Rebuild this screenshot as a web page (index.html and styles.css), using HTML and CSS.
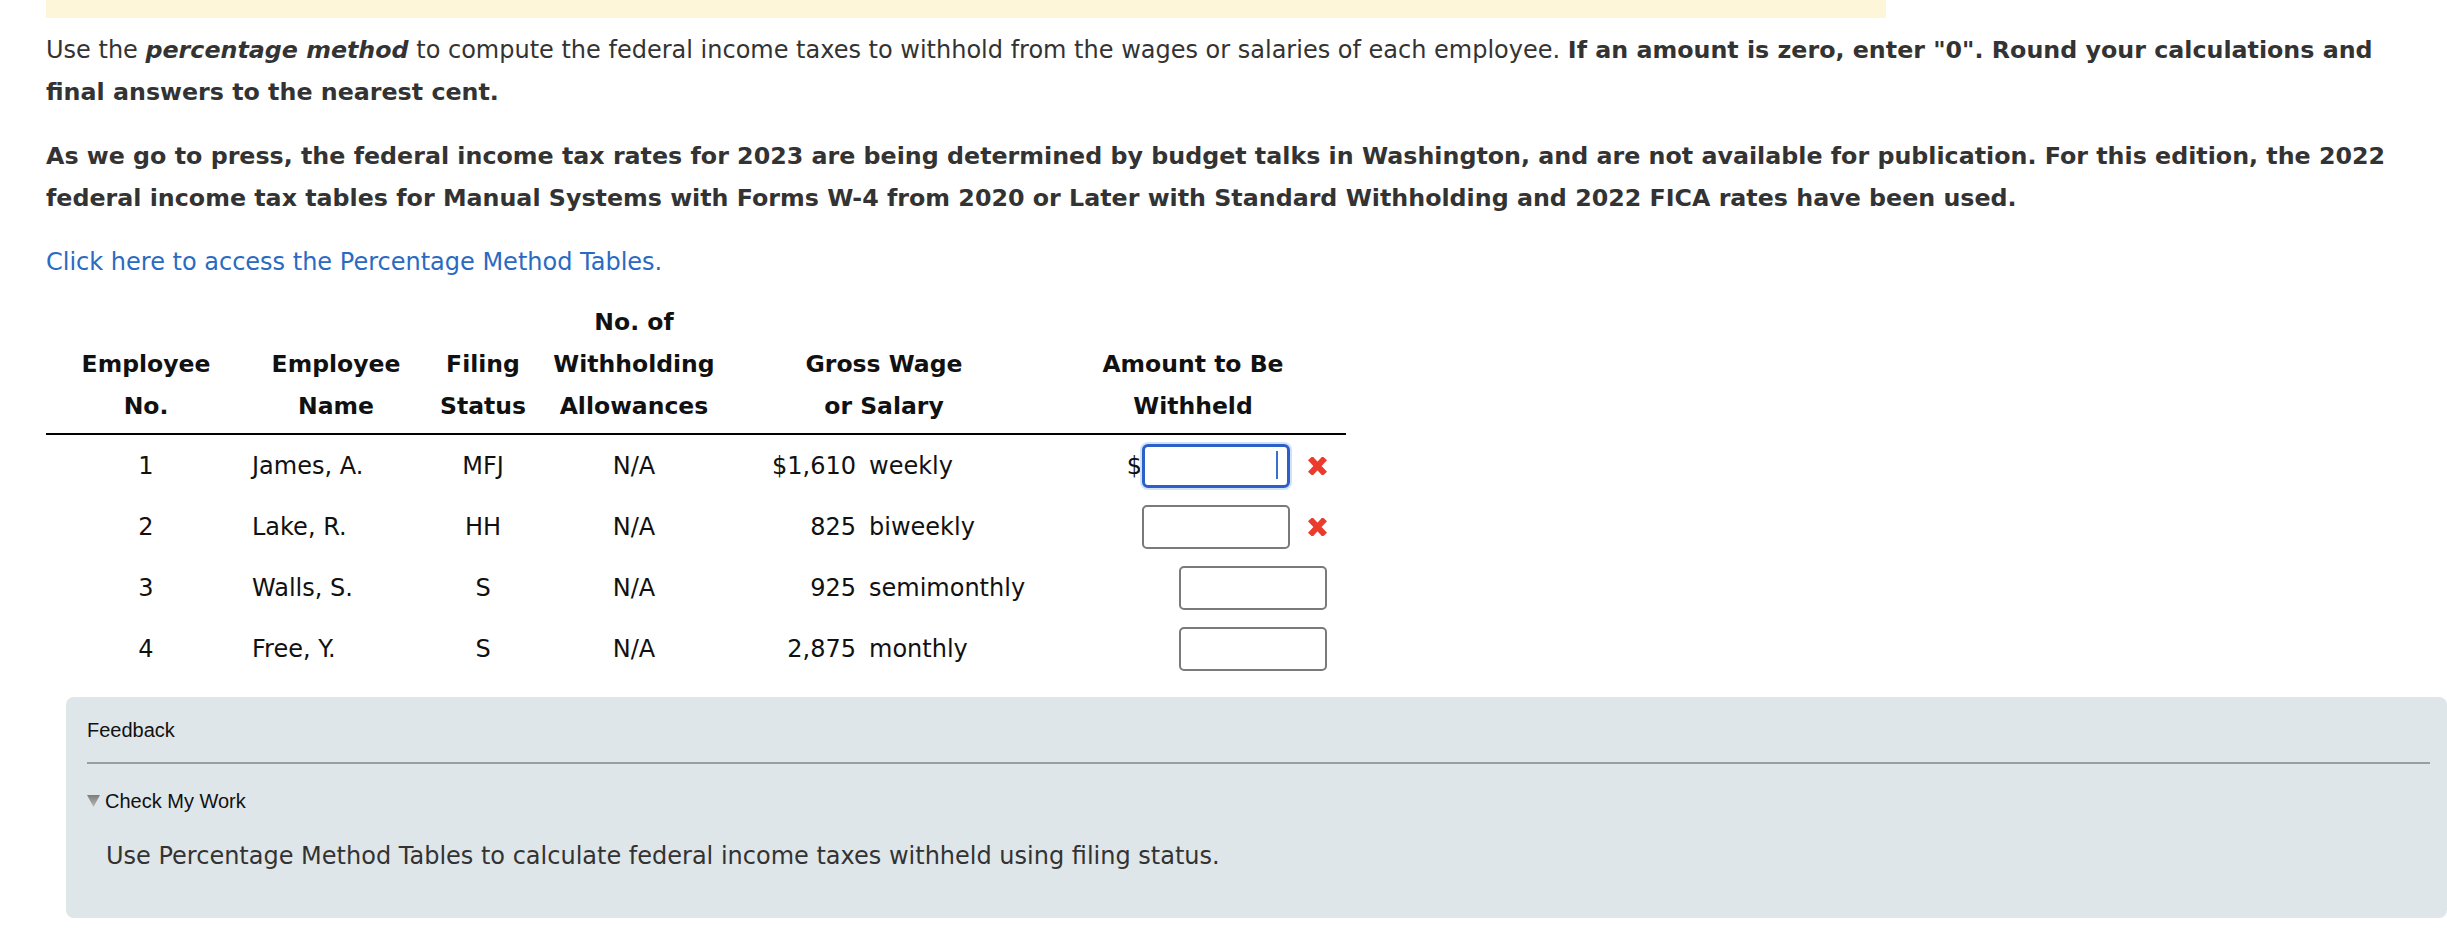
FILE: index.html
```html
<!DOCTYPE html>
<html lang="en">
<head>
    <meta charset="UTF-8">
    <meta name="viewport" content="width=device-width, initial-scale=1.0">
    <title>Percentage Method Withholding</title>
    <link rel="stylesheet" href="styles.css">
</head>
<body>
    <div class="page">
        <div class="notice-bar"></div>

        <div class="intro">
            <p>Use the <strong><em>percentage method</em></strong> to compute the federal income taxes to withhold from the wages or salaries of each employee. <strong>If an amount is zero, enter "0". Round your calculations and final answers to the nearest cent.</strong></p>
            <p><strong>As we go to press, the federal income tax rates for 2023 are being determined by budget talks in Washington, and are not available for publication. For this edition, the 2022 federal income tax tables for Manual Systems with Forms W-4 from 2020 or Later with Standard Withholding and 2022 FICA rates have been used.</strong></p>
            <p><a class="tables-link" href="#">Click here to access the Percentage Method Tables.</a></p>
        </div>

        <table class="payroll">
            <colgroup>
                <col class="c-no">
                <col class="c-name">
                <col class="c-status">
                <col class="c-allow">
                <col class="c-wage">
                <col class="c-amount">
            </colgroup>
            <thead>
                <tr>
                    <th>Employee<br>No.</th>
                    <th>Employee<br>Name</th>
                    <th>Filing<br>Status</th>
                    <th>No. of<br>Withholding<br>Allowances</th>
                    <th>Gross Wage<br>or Salary</th>
                    <th>Amount to Be<br>Withheld</th>
                </tr>
            </thead>
            <tbody>
                <tr>
                    <td>1</td>
                    <td class="name">James, A.</td>
                    <td>MFJ</td>
                    <td>N/A</td>
                    <td class="wage"><span class="amt">$1,610</span><span class="period">weekly</span></td>
                    <td class="answer">
                        <span class="dollar">$</span><span class="field-wrap"><input class="amount-input focused" type="text"><span class="caret"></span></span><svg class="wrong" width="19" height="18" viewBox="0 0 19 18"><path d="M2.2 1.2 L16.8 16.8 M16.8 1.2 L2.2 16.8" stroke="#ea3b2c" stroke-width="6" fill="none"/></svg>
                    </td>
                </tr>
                <tr>
                    <td>2</td>
                    <td class="name">Lake, R.</td>
                    <td>HH</td>
                    <td>N/A</td>
                    <td class="wage"><span class="amt">825</span><span class="period">biweekly</span></td>
                    <td class="answer">
                        <input class="amount-input" type="text"><svg class="wrong" width="19" height="18" viewBox="0 0 19 18"><path d="M2.2 1.2 L16.8 16.8 M16.8 1.2 L2.2 16.8" stroke="#ea3b2c" stroke-width="6" fill="none"/></svg>
                    </td>
                </tr>
                <tr>
                    <td>3</td>
                    <td class="name">Walls, S.</td>
                    <td>S</td>
                    <td>N/A</td>
                    <td class="wage"><span class="amt">925</span><span class="period">semimonthly</span></td>
                    <td class="answer"><input class="amount-input" type="text"></td>
                </tr>
                <tr>
                    <td>4</td>
                    <td class="name">Free, Y.</td>
                    <td>S</td>
                    <td>N/A</td>
                    <td class="wage"><span class="amt">2,875</span><span class="period">monthly</span></td>
                    <td class="answer"><input class="amount-input" type="text"></td>
                </tr>
            </tbody>
        </table>

        <div class="feedback">
            <div class="feedback-title">Feedback</div>
            <div class="check-work">
                <svg class="toggle" width="13" height="12" viewBox="0 0 13 12">
                    <defs>
                        <linearGradient id="tri" x1="0" y1="0" x2="0" y2="1">
                            <stop offset="0" stop-color="#7d7d7d"/>
                            <stop offset="1" stop-color="#b9b9b9"/>
                        </linearGradient>
                    </defs>
                    <polygon points="0,0 13,0 6.5,12" fill="url(#tri)"/>
                </svg>Check My Work
            </div>
            <p class="hint">Use Percentage Method Tables to calculate federal income taxes withheld using filing status.</p>
        </div>
    </div>
</body>
</html>
```

FILE: styles.css
```css
body {
    margin: 0;
    font-family: "DejaVu Sans", Verdana, sans-serif;
    background-color: #fff;
    color: #333;
}

.page {
    padding-left: 46px;
}

.notice-bar {
    width: 1840px;
    height: 18px;
    background-color: #fdf6d9;
}

.intro {
    max-width: 2364px;
    font-size: 24px;
    line-height: 42px;
}

.intro strong {
    font-size: 0.99em;
}

.intro p {
    margin: 22px 0 0;
}

.intro p:first-child {
    margin-top: 11px;
}

.tables-link {
    color: #2a6ac2;
    text-decoration: none;
}

.payroll {
    margin-top: 18px;
    width: 1300px;
    border-collapse: collapse;
    table-layout: fixed;
    font-size: 24px;
    color: #111;
}

.c-no { width: 200px; }
.c-name { width: 180px; }
.c-status { width: 114px; }
.c-allow { width: 188px; }
.c-wage { width: 312px; }
.c-amount { width: 306px; }

.payroll thead tr {
    border-bottom: 2px solid #000;
}

.payroll th {
    font-size: 23.5px;
    line-height: 42px;
    padding: 0 0 6px;
    vertical-align: bottom;
    text-align: center;
    font-weight: bold;
}

.payroll td {
    height: 61px;
    padding: 0;
    text-align: center;
    vertical-align: middle;
}

.payroll td.name {
    text-align: left;
    padding-left: 6px;
}

.payroll td.wage {
    text-align: left;
}

.amt {
    display: inline-block;
    width: 128px;
    text-align: right;
}

.period {
    margin-left: 13px;
}

.payroll td.answer {
    text-align: right;
    padding-right: 19px;
    white-space: nowrap;
}

.dollar {
    vertical-align: middle;
}

.field-wrap {
    position: relative;
    display: inline-block;
    vertical-align: middle;
}

.amount-input {
    box-sizing: border-box;
    width: 148px;
    height: 44px;
    margin: 0;
    border: 2px solid #7a7a7a;
    border-radius: 5px;
    background-color: #fff;
    vertical-align: middle;
}

.amount-input.focused {
    border: 3px solid #2d5fc8;
    border-radius: 6px;
    box-shadow: 0 0 0 2px #d3e2fb;
    outline: none;
}

.caret {
    position: absolute;
    right: 12px;
    top: 7px;
    width: 2px;
    height: 28px;
    background-color: #3a6fcf;
}

.wrong {
    margin-left: 18px;
    vertical-align: middle;
}

.feedback {
    margin: 18px 0 0 20px;
    padding: 22px 17px 41px 21px;
    background-color: #dfe6e9;
    border-radius: 8px;
}

.feedback-title {
    font-family: "Liberation Sans", Arial, sans-serif;
    font-size: 20px;
    line-height: 23px;
    color: #111;
    padding-bottom: 20px;
    border-bottom: 2px solid #9a9ea1;
}

.check-work {
    margin-top: 26px;
    font-family: "Liberation Sans", Arial, sans-serif;
    font-size: 20px;
    line-height: 23px;
    color: #111;
}

.toggle {
    margin-right: 5px;
    vertical-align: 1px;
}

.hint {
    margin: 22px 0 0 19px;
    font-size: 24px;
    line-height: 42px;
    color: #333;
}
```
